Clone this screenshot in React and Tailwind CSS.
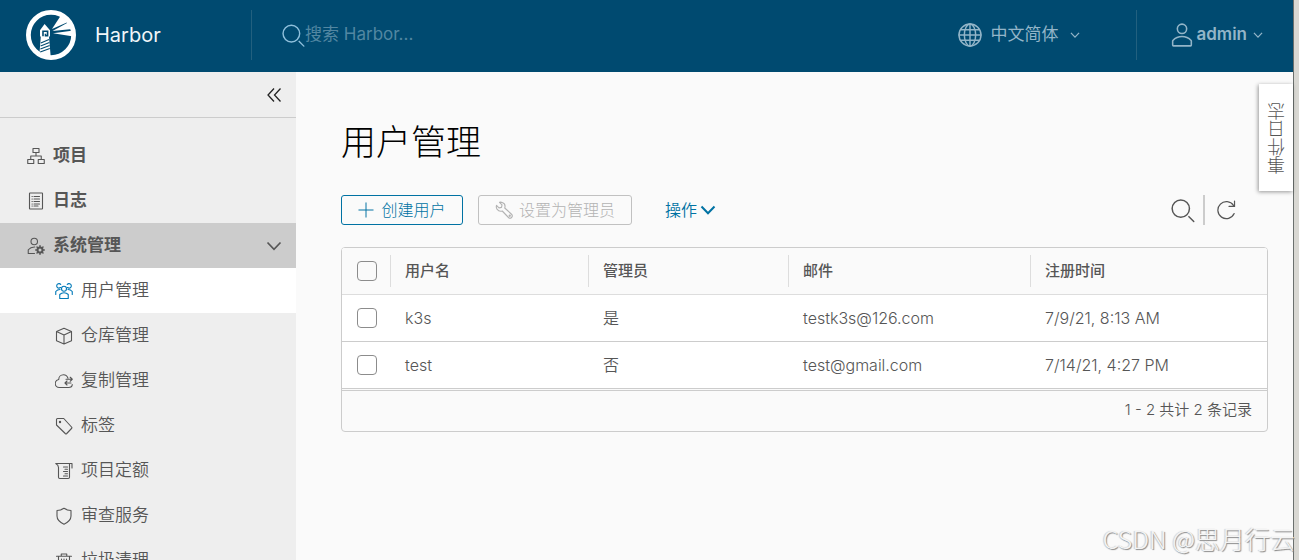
import React from "react";

function Icon({ className, children }) {
  return (
    <svg
      viewBox="0 0 36 36"
      className={className}
      fill="none"
      stroke="currentColor"
      strokeWidth="2.2"
      strokeLinejoin="round"
      strokeLinecap="round"
      aria-hidden="true"
    >
      {children}
    </svg>
  );
}

function SearchIcon({ className }) {
  return (
    <svg viewBox="0 0 36 36" className={className} fill="currentColor" aria-hidden="true">
      <path d="M16.33,5.05A10.95,10.95,0,1,1,5.39,16,11,11,0,0,1,16.33,5.05m0-2.05a13,13,0,1,0,13,13,13,13,0,0,0-13-13Z" />
      <path d="M35,33.29l-7.37-7.42-1.42,1.41,7.37,7.42A1,1,0,1,0,35,33.29Z" />
    </svg>
  );
}

function UserIcon({ className }) {
  return (
    <svg viewBox="0 0 36 36" className={className} fill="currentColor" aria-hidden="true">
      <path d="M18,17a7,7,0,1,0-7-7A7,7,0,0,0,18,17ZM18,5a5,5,0,1,1-5,5A5,5,0,0,1,18,5Z" />
      <path d="M30.47,24.37a17.16,17.16,0,0,0-24.93,0A2,2,0,0,0,5,25.74V31a2,2,0,0,0,2,2H29a2,2,0,0,0,2-2V25.74A2,2,0,0,0,30.47,24.37ZM29,31H7V25.73a15.17,15.17,0,0,1,22,0h0Z" />
    </svg>
  );
}

function GlobeIcon({ className }) {
  return (
    <Icon className={className}>
      <circle cx="18" cy="18" r="16.5" />
      <ellipse cx="18" cy="18" rx="8.5" ry="16.5" />
      <path d="M18 1.500v33M1.500 18h33M4.500 10h27M4.500 26h27" />
    </Icon>
  );
}

function RefreshIcon({ className }) {
  return (
    <svg viewBox="0 0 36 36" className={className} fill="currentColor" aria-hidden="true">
      <path d="M22.4,11.65a1.09,1.09,0,0,0,1.09,1.09H34.43V1.81a1.09,1.09,0,1,0-2.19,0V8.95a16.41,16.41,0,1,0,1.47,15.86,1.12,1.12,0,0,0-2.05-.9,14.18,14.18,0,1,1-1.05-13.36H23.5A1.09,1.09,0,0,0,22.4,11.65Z" />
    </svg>
  );
}

function Chevron({ className, weight = 2 }) {
  return (
    <svg
      viewBox="0 0 16 16"
      className={className}
      fill="none"
      stroke="currentColor"
      strokeWidth={weight}
      aria-hidden="true"
    >
      <path d="M1.500 4.500 8 11.300l6.500-6.800" />
    </svg>
  );
}

function Logo({ className }) {
  return (
    <svg viewBox="0 0 50 50" className={className} aria-hidden="true">
      <circle cx="25" cy="25" r="22.6" fill="none" stroke="#fff" strokeWidth="4.8" />
      <g fill="#fff">
        <path d="M26 19 34.500 6l7.500 6Z" />
        <path d="M26.500 21 42 12.600l4.500 6.400Z" />
        <path d="M27 23.200 47.500 20.500v6Z" />
        <path d="M14 20.200 18.600 14l5.400 6.200v6.300h-1l1.800 21.500-11.400-3.400 1.400-18.100H14Z" />
      </g>
      <g stroke="#004a70" fill="none">
        <path d="M17 26.200v-5h4.600v4.500h-2.100v-2" strokeWidth="1.6" />
        <path d="m14.800 33 8.200-3.600M14.600 36l8.800-3.600M14.400 39l9.200-3.600M14.200 42l9.600-3.600" strokeWidth="1.1" />
      </g>
    </svg>
  );
}

const icons = {
  projects: (
    <>
      <rect x="12" y="3" width="12" height="8" />
      <rect x="1.5" y="25" width="12" height="8" />
      <rect x="22.5" y="25" width="12" height="8" />
      <path d="M18 11v7M7.500 24v-6h21v6" />
    </>
  ),
  logs: (
    <>
      <rect x="5" y="2" width="26" height="32" rx="1" />
      <path d="M14 9h11M14 14h11M14 19h11M14 24h11M14 28h8M10 9h.6M10 14h.6M10 19h.6M10 24h.6M10 28h.6" />
    </>
  ),
  admin: (
    <>
      <circle cx="14.5" cy="9" r="6.5" />
      <path d="M15 33H2.500v-7.500C6 21.500 10 19.800 15.500 20" />
      <circle cx="26" cy="26" r="5" strokeWidth="4" />
      <path d="M26 17.500v3M26 31.500v3M17.500 26h3M31.500 26h3M20 20l2 2M30 30l2 2M32 20l-2 2M22 30l-2 2" strokeWidth="3" />
    </>
  ),
  users: (
    <>
      <circle cx="18" cy="13.5" r="5" />
      <path d="M9.500 33v-8c4.500-4.500 12.500-4.500 17 0v8Z" />
      <path d="M11 11a4.500 4.500 0 1 1 .5-6M25 11a4.500 4.500 0 1 0-.5-6M1.500 25v-6c2-2.500 5-4 8.500-4M34.500 25v-6c-2-2.500-5-4-8.500-4" />
    </>
  ),
  cube: (
    <path d="M18 2.500 33 9v18.500L18 34 3 27.500V9ZM3 9l15 7 15-7M18 16v18" />
  ),
  replication: (
    <>
      <path d="M26 12.500C24.500 8 21 5.500 17 5.500c-5.500 0-9.500 4-9.500 9.500-4 .8-7 3.500-7 8 0 4.500 3.500 8 8 8H27c4.500 0 7.500-2.500 7.500-6" />
      <path d="M22 14.500h12M30.500 10.500l4 4-4 4M32 22H20M24 18l-4 4 4 4" />
    </>
  ),
  tag: (
    <>
      <path d="M3 5a2 2 0 0 1 2-2h12.500L33.500 20.500a1.500 1.500 0 0 1 0 2L23 33.500a1.500 1.500 0 0 1-2 0L3 16Z" />
      <circle cx="10" cy="10" r="1.3" />
    </>
  ),
  quota: (
    <>
      <path d="M1.500 3H34v9M1.500 3C5 5 7 7.500 7 11v19.500a2.500 2.500 0 0 0 2.500 2.500h17a2.500 2.500 0 0 0 2.500-2.500V3" />
      <path d="M17 10h8M20 14.500h5M17 19h8M20 23.500h5M17 28h8" />
    </>
  ),
  shield: (
    <path d="M18 2.500c4.500 3 9 4.300 14 4.500v11c0 7.500-5.500 12.500-14 16.500C9.500 30.500 4 25.500 4 18V7c5-.2 9.500-1.500 14-4.500Z" />
  ),
  trash: (
    <>
      <path d="M3 8.500h30M12.500 8V4h11v4M7 9v22a3 3 0 0 0 3 3h16a3 3 0 0 0 3-3V9" />
      <path d="M13 14v14M18 14v14M23 14v14" />
    </>
  ),
};

const subItems = [
  { label: "用户管理", icon: "users", active: true },
  { label: "仓库管理", icon: "cube" },
  { label: "复制管理", icon: "replication" },
  { label: "标签", icon: "tag" },
  { label: "项目定额", icon: "quota" },
  { label: "审查服务", icon: "shield" },
  { label: "垃圾清理", icon: "trash" },
];

const users = [
  { name: "k3s", admin: "是", email: "testk3s@126.com", created: "7/9/21, 8:13 AM" },
  { name: "test", admin: "否", email: "test@gmail.com", created: "7/14/21, 4:27 PM" },
];

function Header() {
  return (
    <header className="flex h-[72px] shrink-0 items-center bg-[#004a70] pr-[30px] pb-0.5 text-[#93b5c8]">
      <a href="#home" className="flex h-[50px] w-[251px] shrink-0 items-center gap-[19px] pl-[26px] text-xl text-[#f0f6f9]">
        <Logo className="size-[50px]" />
        <span>Harbor</span>
      </a>
      <label className="flex h-[50px] flex-1 items-center border-l border-[#22607f] pl-7">
        <SearchIcon className="size-[26px] text-[#8fc0dc]" />
        <input
          type="text"
          aria-label="搜索 Harbor"
          placeholder="搜索 Harbor..."
          className="w-full bg-transparent text-[17px] outline-none placeholder:text-[#5287a2]"
        />
      </label>
      <button type="button" className="flex h-[50px] shrink-0 items-center pr-14 text-[17px]">
        <GlobeIcon className="mr-2 size-6" />
        <span>中文简体</span>
        <Chevron className="ml-3 size-2.5" />
      </button>
      <button type="button" className="flex h-[50px] shrink-0 items-center border-l border-[#22607f] pl-[31px] text-[17px] font-semibold">
        <UserIcon className="size-7" />
        <span>admin</span>
        <Chevron className="ml-1.5 size-2.5" />
      </button>
    </header>
  );
}

function Sidebar() {
  return (
    <nav className="flex w-[296px] shrink-0 flex-col overflow-hidden bg-[#eeeeee] text-[17px] text-[#565656]">
      <div className="flex h-[46px] shrink-0 items-center justify-end border-b border-[#cccccc] pr-3.5">
        <button type="button" aria-label="收起" className="text-[#222222]">
          <svg viewBox="0 0 16 16" className="size-4" fill="none" stroke="currentColor" strokeWidth="1.3" aria-hidden="true">
            <path d="M8 1.500 2 8l6 6.500M14.500 1.500 8.500 8l6 6.500" />
          </svg>
        </button>
      </div>
      <div className="flex flex-col pt-[15px]">
        <a href="#projects" className="flex h-[45px] items-center gap-2 pl-[27px] font-bold">
          <Icon className="size-[18px]">{icons.projects}</Icon>
          项目
        </a>
        <a href="#logs" className="flex h-[45px] items-center gap-2 pl-[27px] font-bold">
          <Icon className="size-[18px]">{icons.logs}</Icon>
          日志
        </a>
        <button type="button" aria-expanded="true" className="flex h-[45px] items-center gap-2 bg-[#cccccc] pr-3.5 pl-[27px] font-bold">
          <Icon className="size-[18px]">{icons.admin}</Icon>
          <span className="flex-1 text-left">系统管理</span>
          <Chevron className="size-4" weight={1.7} />
        </button>
        {subItems.map((item) => (
          <a
            key={item.label}
            href={"#" + item.icon}
            className={
              item.active
                ? "flex h-[45px] items-center gap-2 bg-white pl-[55px] font-[350]"
                : "flex h-[45px] items-center gap-2 pl-[55px] font-[350]"
            }
          >
            <Icon className={item.active ? "size-[18px] text-[#0079b8]" : "size-[18px]"}>{icons[item.icon]}</Icon>
            {item.label}
          </a>
        ))}
      </div>
    </nav>
  );
}

function Checkbox({ label }) {
  return (
    <input
      type="checkbox"
      aria-label={label}
      className="block size-5 appearance-none rounded border border-[#8c8c8c] bg-transparent"
    />
  );
}

function HeadCell({ className, children }) {
  return (
    <th scope="col" className={"p-0 text-left font-medium " + className}>
      <div className="flex h-8 items-center border-l border-[#dddddd] pl-3.5">{children}</div>
    </th>
  );
}

function UserTable() {
  return (
    <div className="mt-[22px] overflow-hidden rounded border border-[#cccccc] bg-[#fafafa]">
      <table className="w-full table-fixed border-collapse bg-white">
        <thead>
          <tr className="h-[46px] border-b border-[#dddddd] bg-[#fafafa] text-[15px]">
            <th scope="col" className="w-12 p-0 pl-[15px]">
              <Checkbox label="全选" />
            </th>
            <HeadCell className="w-[198px]">用户名</HeadCell>
            <HeadCell className="w-[200px]">管理员</HeadCell>
            <HeadCell className="w-[242px]">邮件</HeadCell>
            <HeadCell className="">注册时间</HeadCell>
          </tr>
        </thead>
        <tbody>
          {users.map((user) => (
            <tr key={user.name} className="h-[47px] border-b border-[#cccccc] text-base font-[350]">
              <td className="p-0 pl-[15px]">
                <Checkbox label={user.name} />
              </td>
              <td className="p-0 pl-[15px]">{user.name}</td>
              <td className="p-0 pl-[15px]">{user.admin}</td>
              <td className="p-0 pl-[15px]">{user.email}</td>
              <td className="p-0 pl-[15px]">{user.created}</td>
            </tr>
          ))}
        </tbody>
      </table>
      <div className="mt-px flex h-[41px] items-center justify-end border-t border-[#cccccc] pr-[15px] text-[15px] font-[350]">
        1 - 2 共计 2 条记录
      </div>
    </div>
  );
}

function Content() {
  return (
    <main className="min-w-0 flex-1 bg-[#fafafa] pt-[46px] pr-[25px] pl-[45px] text-[#565656]">
      <h1 className="text-[35px] leading-[48px] font-light text-black">用户管理</h1>
      <div className="mt-[29px] flex h-[30px] items-center text-base font-light">
        <button type="button" className="flex h-full w-[122px] items-center justify-center gap-[7px] rounded-[3px] border border-[#0072a3] text-[#0072a3]">
          <Icon className="size-4">
            <path d="M18 2v32M2 18h32" />
          </Icon>
          创建用户
        </button>
        <button type="button" disabled className="ml-[15px] flex h-full w-[154px] items-center justify-center gap-1.5 rounded-[3px] border border-[#c1c1c1] text-[#b3b3b3]">
          <Icon className="size-[18px]">
            <path d="M33 26.500 19.500 14c1.500-5-1-9.500-5-11-2-.8-4-.8-5.500-.3l5 5-1 5-5 1-5-5c-.8 2.500-.5 5 1 7.500 2.500 3.500 6.500 5 10.500 3.800L27 33c2 2 4.500 1.500 6 0s2-4.500 0-6.500Z" />
            <circle cx="29.5" cy="29.5" r="1.2" />
          </Icon>
          设置为管理员
        </button>
        <button type="button" className="ml-[33px] flex items-center gap-[3px] font-[350] text-[#0072a3]">
          操作
          <Chevron className="size-4" />
        </button>
        <div className="ml-auto flex h-full items-center pr-8 text-[#565656]">
          <button type="button" aria-label="搜索" className="pr-2">
            <SearchIcon className="size-[26px]" />
          </button>
          <button type="button" aria-label="刷新" className="flex h-full items-center border-l-2 border-[#cccccc] pl-[11px]">
            <RefreshIcon className="size-5" />
          </button>
        </div>
      </div>
      <UserTable />
    </main>
  );
}

export default function App() {
  return (
    <div className="relative flex h-screen overflow-hidden bg-[#d9d8d3] pr-[5px] font-['Inter','Noto_Sans_CJK_SC',sans-serif]">
      <div className="flex min-w-0 flex-1 flex-col border-r border-[#6b706e]">
        <Header />
        <div className="flex min-h-0 flex-1">
          <Sidebar />
          <Content />
        </div>
      </div>
      <button
        type="button"
        className="absolute top-[84px] right-1.5 flex h-[107px] w-[34px] items-center justify-center bg-white pl-1 text-lg font-light text-[#565656] shadow-[-1px_1px_4px_rgba(0,0,0,0.4)]"
      >
        <span className="rotate-180 [writing-mode:vertical-rl]">事件日志</span>
      </button>
      <div className="absolute right-1 bottom-1 font-['Noto_Sans_CJK_SC',sans-serif] text-[25px] leading-9 font-light text-[#f4f4f4] [text-shadow:1px_1px_1px_#888888,-1px_0_1px_#cccccc]">
        CSDN @思月行云
      </div>
    </div>
  );
}
